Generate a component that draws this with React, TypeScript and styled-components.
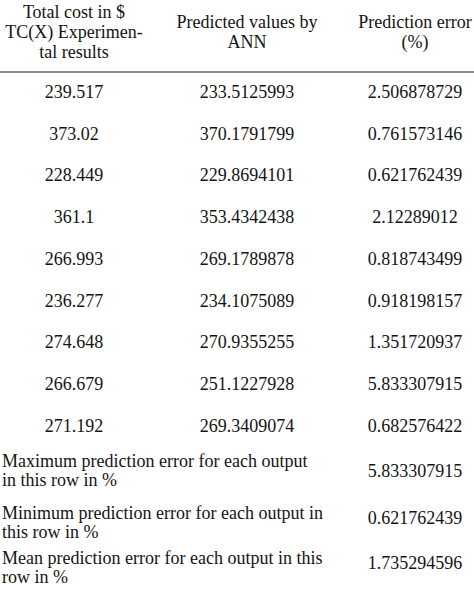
import React from "react";
import styled, { createGlobalStyle } from "styled-components";

const GlobalStyle = createGlobalStyle`
  html, body {
    margin: 0;
    padding: 0;
    background: #ffffff;
    overflow: hidden;
  }
  body {
    font-family: "Liberation Serif", "Times New Roman", serif;
    color: #141414;
  }
`;

const columns = "148px 198px 138px";

const Table = styled.div`
  width: 484px;
  display: flex;
  flex-direction: column;
  font-size: 18px;
`;

const HeaderRow = styled.div`
  display: grid;
  grid-template-columns: ${columns};
  align-items: center;
  padding: 2px 0 9px;
  border-bottom: 2px solid #8a8a8a;
`;

const HeaderCell = styled.div`
  text-align: center;
  line-height: 20px;
`;

const DataRow = styled.div`
  display: grid;
  grid-template-columns: ${columns};
  align-items: center;
  height: 41.75px;
  padding-bottom: 4px;
  box-sizing: border-box;
  line-height: 20px;
`;

const Cell = styled.div`
  text-align: center;
`;

const SummaryRow = styled.div`
  display: grid;
  grid-template-columns: 346px 138px;
  align-items: center;
  height: 45px;
`;

const SummaryLabel = styled.div<{ $top: number }>`
  align-self: start;
  padding: ${(p) => p.$top}px 0 0 2px;
  line-height: 19px;
`;

const SummaryValue = styled.div`
  text-align: center;
  line-height: 20px;
`;

const rows: [string, string, string][] = [
  ["239.517", "233.5125993", "2.506878729"],
  ["373.02", "370.1791799", "0.761573146"],
  ["228.449", "229.8694101", "0.621762439"],
  ["361.1", "353.4342438", "2.12289012"],
  ["266.993", "269.1789878", "0.818743499"],
  ["236.277", "234.1075089", "0.918198157"],
  ["274.648", "270.9355255", "1.351720937"],
  ["266.679", "251.1227928", "5.833307915"],
  ["271.192", "269.3409074", "0.682576422"],
];

const summary: { first: string; second: string; value: string; top: number }[] = [
  { first: "Maximum prediction error for each output", second: "in this row in %", value: "5.833307915", top: 3 },
  { first: "Minimum prediction error for each output in", second: "this row in %", value: "0.621762439", top: 10 },
  { first: "Mean prediction error for each output in this", second: "row in %", value: "1.735294596", top: 10 },
];

export default function App() {
  return (
    <>
      <GlobalStyle />
      <Table>
        <HeaderRow>
          <HeaderCell>
            Total cost in $<br />
            TC(X) Experimen-
            <br />
            tal results
          </HeaderCell>
          <HeaderCell>
            Predicted values by
            <br />
            ANN
          </HeaderCell>
          <HeaderCell>
            Prediction error
            <br />
            (%)
          </HeaderCell>
        </HeaderRow>

        {rows.map((r, i) => (
          <DataRow key={i}>
            <Cell>{r[0]}</Cell>
            <Cell>{r[1]}</Cell>
            <Cell>{r[2]}</Cell>
          </DataRow>
        ))}

        {summary.map((s, i) => (
          <SummaryRow key={i}>
            <SummaryLabel $top={s.top}>
              {s.first}
              <br />
              {s.second}
            </SummaryLabel>
            <SummaryValue>{s.value}</SummaryValue>
          </SummaryRow>
        ))}
      </Table>
    </>
  );
}
